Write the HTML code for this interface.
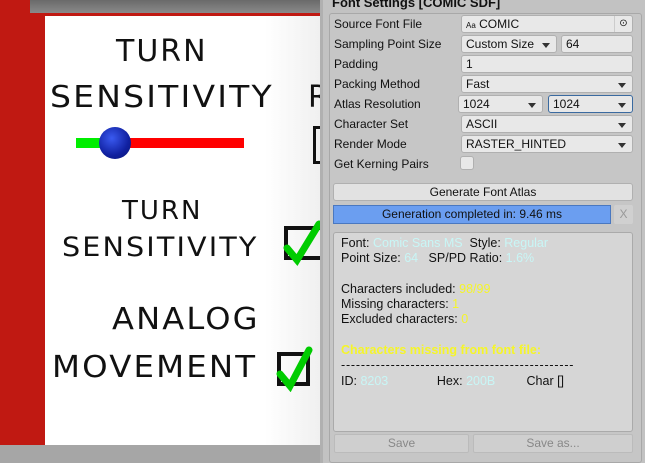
<!DOCTYPE html>
<html><head><style>
*{margin:0;padding:0;box-sizing:border-box}
body{width:645px;height:463px;overflow:hidden;background:#a8a8a8;position:relative;font-family:"Liberation Sans",sans-serif}
.a{position:absolute}
.game{font-family:"Comic Sans MS","DejaVu Sans",sans-serif;color:#111;white-space:nowrap;letter-spacing:2px;transform-origin:left top}
.lbl{position:absolute;left:334px;font-size:12px;color:#111}
.fld{position:absolute;height:18px;background:#e8e8e8;border:1px solid #b0b0b0;border-radius:3px;font-size:12px;color:#111;padding-left:4px;line-height:16px}
.dd::after{content:"";position:absolute;right:6px;top:7px;border-left:4px solid transparent;border-right:4px solid transparent;border-top:5px solid #333}
.info{font-size:12.5px;color:#111;line-height:15.3px;white-space:pre}
.c{color:#c8f6f6}.y{color:#f5f52a}
</style></head><body>
<div class="a" style="left:0;top:0;width:45px;height:445px;background:#c01912"></div>
<div class="a" style="left:30px;top:0;width:290px;height:13px;background:linear-gradient(#6a6a6a,#8a8a8a)"></div>
<div class="a" style="left:30px;top:13px;width:290px;height:3px;background:#c01912"></div>
<div class="a" style="left:45px;top:16px;width:275px;height:429px;background:linear-gradient(90deg,#fff 80%,#f0f0f0)"></div>
<div class="a" style="left:0;top:445px;width:320px;height:18px;background:#a6a6a6"></div>

<div class="a game" style="left:116px;top:34px;font-size:30px">TURN</div>
<div class="a game" style="left:50px;top:80px;font-size:30px;transform:scaleX(1.1)">SENSITIVITY</div>
<div class="a game" style="left:308px;top:80px;font-size:30px">R</div>
<div class="a" style="left:313px;top:126px;width:8px;height:38px;border:3px solid #111;border-right:none"></div>
<div class="a" style="left:76px;top:138px;width:30px;height:10px;background:#0e0"></div>
<div class="a" style="left:106px;top:138px;width:138px;height:10px;background:#f00"></div>
<div class="a" style="left:99px;top:127px;width:32px;height:32px;border-radius:50%;background:radial-gradient(circle at 40% 35%,#3a5af0,#1020a0 60%,#0a1470)"></div>
<div class="a game" style="left:122px;top:196px;font-size:26px">TURN</div>
<div class="a game" style="left:62px;top:232px;font-size:27px;transform:scaleX(1.06)">SENSITIVITY</div>
<div class="a" style="left:284px;top:226px;width:36px;height:34px;border:4px solid #111;border-right:none"></div>
<svg class="a" style="left:283px;top:218px" width="40" height="48"><path d="M4 30 L14 42 L36 6" stroke="#0c0" stroke-width="7" fill="none" stroke-linecap="round"/></svg>
<div class="a game" style="left:112px;top:302px;font-size:30px;transform:scaleX(1.07)">ANALOG</div>
<div class="a game" style="left:52px;top:350px;font-size:30px;transform:scaleX(1.08)">MOVEMENT</div>
<div class="a" style="left:277px;top:352px;width:33px;height:34px;border:4px solid #111"></div>
<svg class="a" style="left:276px;top:344px" width="40" height="48"><path d="M4 30 L14 42 L33 6" stroke="#0c0" stroke-width="7" fill="none" stroke-linecap="round"/></svg>

<div class="a" style="left:320px;top:0;width:325px;height:463px;background:#c2c2c2;border-left:3px solid #b0b0b0"></div>
<div class="a" style="left:332px;top:-5px;font-size:13px;font-weight:bold;color:#111">Font Settings [COMIC SDF]</div>
<div class="a" style="left:329px;top:13px;width:313px;height:450px;border:1px solid #a8a8a8;border-radius:3px;background:#c6c6c6"></div>

<div class="lbl" style="top:17px">Source Font File</div>
<div class="fld" style="left:461px;top:15px;width:172px"><span style="font-size:8px">Aa</span> COMIC<span style="position:absolute;right:0;top:0;width:18px;height:16px;border-left:1px solid #ccc;text-align:center;font-size:10px">⊙</span></div>
<div class="lbl" style="top:37px">Sampling Point Size</div>
<div class="fld dd" style="left:461px;top:35px;width:96px">Custom Size</div>
<div class="fld" style="left:561px;top:35px;width:72px">64</div>
<div class="lbl" style="top:57px">Padding</div>
<div class="fld" style="left:461px;top:55px;width:172px">1</div>
<div class="lbl" style="top:77px">Packing Method</div>
<div class="fld dd" style="left:461px;top:75px;width:172px">Fast</div>
<div class="lbl" style="top:97px">Atlas Resolution</div>
<div class="fld dd" style="left:458px;top:95px;width:85px">1024</div>
<div class="fld dd" style="left:548px;top:95px;width:85px;border-color:#3a6aa0">1024</div>
<div class="lbl" style="top:117px">Character Set</div>
<div class="fld dd" style="left:461px;top:115px;width:172px">ASCII</div>
<div class="lbl" style="top:137px">Render Mode</div>
<div class="fld dd" style="left:461px;top:135px;width:172px">RASTER_HINTED</div>
<div class="lbl" style="top:157px">Get Kerning Pairs</div>
<div class="fld" style="left:460px;top:156px;width:14px;height:14px"></div>

<div class="fld" style="left:333px;top:183px;width:300px;text-align:center;padding:0;background:#e2e2e2">Generate Font Atlas</div>
<div class="a" style="left:333px;top:205px;width:278px;height:19px;background:#6b9ef0;border:1px solid #4a78c0;font-size:12px;text-align:center;line-height:17px;color:#111">Generation completed in: 9.46 ms</div>
<div class="a" style="left:614px;top:205px;width:19px;height:19px;background:#d0d0d0;border-radius:2px;font-size:12px;color:#999;text-align:center;line-height:19px">X</div>

<div class="a" style="left:333px;top:232px;width:300px;height:200px;background:#d6d6d6;border:1px solid #aaa;border-radius:3px"></div>
<div class="a info" style="left:341px;top:236px">Font: <span class="c">Comic Sans MS</span>  Style: <span class="c">Regular</span>
Point Size: <span class="c">64</span>   SP/PD Ratio: <span class="c">1.6%</span>

Characters included: <span class="y">98/99</span>
Missing characters: <span class="y">1</span>
Excluded characters: <span class="y">0</span>

<b class="y">Characters missing from font file:</b>
<span style="letter-spacing:0.8px">-----------------------------------------------</span>
ID: <span class="c">8203</span>              Hex: <span class="c">200B</span>         Char []</div>

<div class="a" style="left:334px;top:434px;width:135px;height:19px;background:#cfcfcf;border:1px solid #bbb;border-radius:2px;font-size:12px;color:#888;text-align:center;line-height:17px">Save</div>
<div class="a" style="left:473px;top:434px;width:160px;height:19px;background:#cfcfcf;border:1px solid #bbb;border-radius:2px;font-size:12px;color:#888;text-align:center;line-height:17px">Save as...</div>
</body></html>
